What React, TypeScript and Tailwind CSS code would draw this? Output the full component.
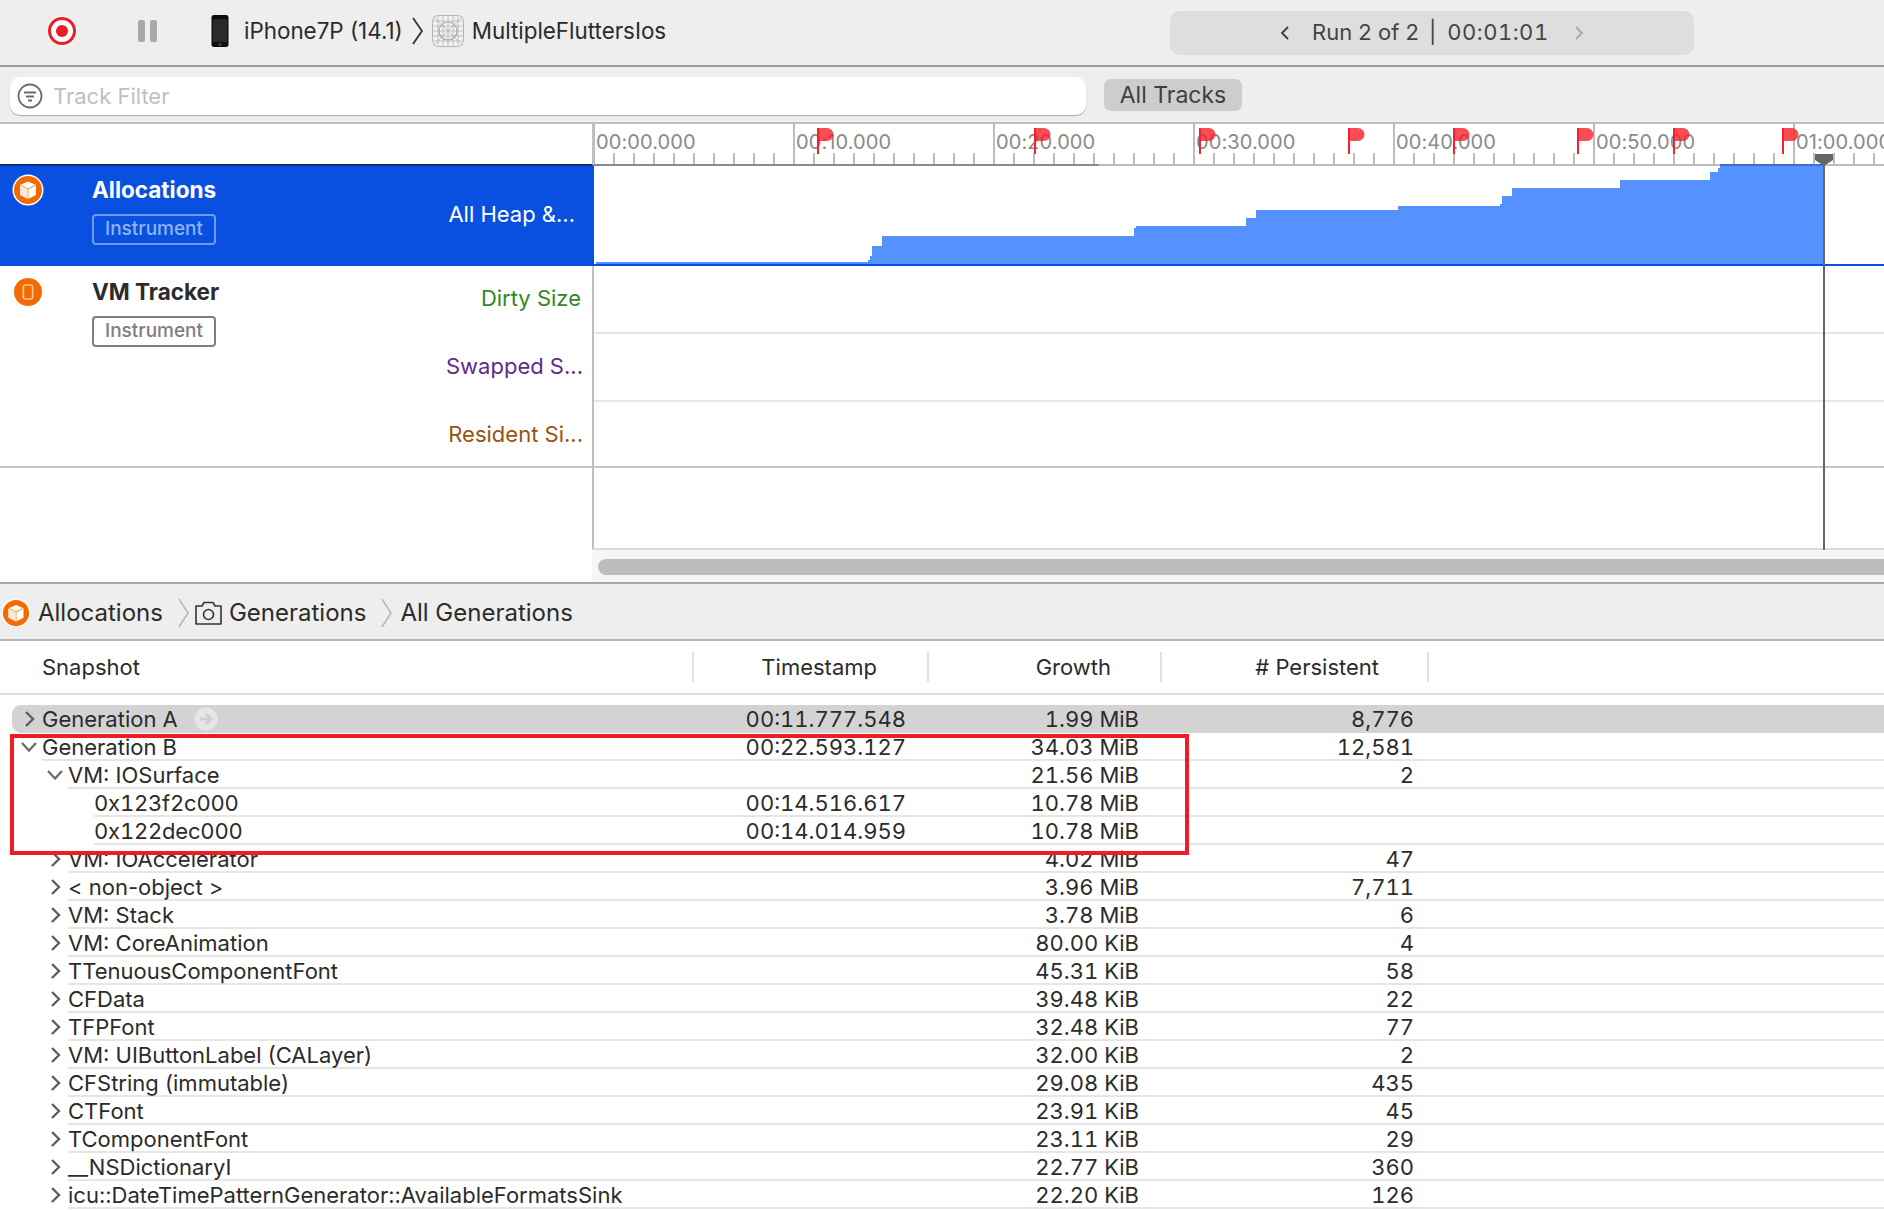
import React from "react";

const TICKS = Array.from({ length: 66 }, (_, i) => i * 20);
const LABELS = ["00:00.000", "00:10.000", "00:20.000", "00:30.000", "00:40.000", "00:50.000", "01:00.000"];
const FLAGS = [818, 1035, 1200, 1349, 1454, 1578, 1674, 1783];

const STEPS: [number, number][] = [
  [596, 262], [868, 260], [870, 256], [872, 246], [882, 236], [1134, 228], [1136, 226], [1246, 218],
  [1256, 210], [1398, 206], [1500, 204], [1502, 196], [1512, 188], [1620, 180], [1710, 172],
  [1718, 168], [1720, 166],
];

function chartPath() {
  const ox = 594;
  const oy = 166;
  let d = `M${STEPS[0][0] - ox} ${98}`;
  STEPS.forEach(([x, y], i) => {
    const next = STEPS[i + 1];
    d += ` L${x - ox} ${y - oy} L${(next ? next[0] : 1825) - ox} ${y - oy}`;
  });
  return `${d} L${1825 - ox} 98 Z`;
}

function Cube({ size }: { size: number }) {
  return (
    <svg width={size} height={size} viewBox="0 0 32 32" className="shrink-0">
      <circle cx="16" cy="16" r="15.5" fill="#ffffff" />
      <circle cx="16" cy="16" r="14" fill="#f26a00" />
      <path d="M16 7.5 L24 11 L24 21 L16 25 L8 21 L8 11 Z" fill="#ffffff" />
      <path d="M8 11 L16 15 L24 11 M16 15 L16 25" fill="none" stroke="#f0a060" strokeWidth="1.2" />
      <path d="M8 11.5 L15.5 15.3 L15.5 24.5 L8 20.7 Z" fill="#ffe8d4" />
    </svg>
  );
}

function Chip() {
  return (
    <svg width="28" height="28" viewBox="0 0 28 28" className="shrink-0">
      <circle cx="14" cy="14" r="14" fill="#f26a00" />
      <rect x="9.5" y="7" width="9" height="14" rx="1.5" fill="none" stroke="#ffc89a" strokeWidth="1.4" />
      <path d="M8 10 H9 M8 13 H9 M8 16 H9 M8 19 H9 M19 10 H20 M19 13 H20 M19 16 H20 M19 19 H20" stroke="#ffc89a" strokeWidth="1" />
    </svg>
  );
}

function Crumb() {
  return (
    <svg width="12" height="30" viewBox="0 0 12 30" className="shrink-0 block">
      <path d="M1 1 L10 15 L1 29" fill="none" stroke="#b8b8b8" strokeWidth="1.6" />
    </svg>
  );
}

function Chevron({ open }: { open: boolean }) {
  if (open) {
    return (
      <svg width="18" height="12" viewBox="0 0 18 12">
        <path d="M2 2 L9 9.5 L16 2" fill="none" stroke="#6e6e6e" strokeWidth="2.4" />
      </svg>
    );
  }
  return (
    <svg width="11" height="18" viewBox="0 0 11 18">
      <path d="M2 2 L9 9 L2 16" fill="none" stroke="#5f5f5f" strokeWidth="2.4" />
    </svg>
  );
}

type RowData = { name: string; level: 1 | 2 | 3; open?: boolean; leaf?: boolean; ts?: string; growth: string; count?: string };

const ROWS: RowData[] = [
  { name: "Generation B", level: 1, open: true, ts: "00:22.593.127", growth: "34.03 MiB", count: "12,581" },
  { name: "VM: IOSurface", level: 2, open: true, growth: "21.56 MiB", count: "2" },
  { name: "0x123f2c000", level: 3, leaf: true, ts: "00:14.516.617", growth: "10.78 MiB" },
  { name: "0x122dec000", level: 3, leaf: true, ts: "00:14.014.959", growth: "10.78 MiB" },
  { name: "VM: IOAccelerator", level: 2, growth: "4.02 MiB", count: "47" },
  { name: "< non-object >", level: 2, growth: "3.96 MiB", count: "7,711" },
  { name: "VM: Stack", level: 2, growth: "3.78 MiB", count: "6" },
  { name: "VM: CoreAnimation", level: 2, growth: "80.00 KiB", count: "4" },
  { name: "TTenuousComponentFont", level: 2, growth: "45.31 KiB", count: "58" },
  { name: "CFData", level: 2, growth: "39.48 KiB", count: "22" },
  { name: "TFPFont", level: 2, growth: "32.48 KiB", count: "77" },
  { name: "VM: UIButtonLabel (CALayer)", level: 2, growth: "32.00 KiB", count: "2" },
  { name: "CFString (immutable)", level: 2, growth: "29.08 KiB", count: "435" },
  { name: "CTFont", level: 2, growth: "23.91 KiB", count: "45" },
  { name: "TComponentFont", level: 2, growth: "23.11 KiB", count: "29" },
  { name: "__NSDictionaryI", level: 2, growth: "22.77 KiB", count: "360" },
  { name: "icu::DateTimePatternGenerator::AvailableFormatsSink", level: 2, growth: "22.20 KiB", count: "126" },
];

function Row({ r }: { r: RowData }) {
  const slot = r.level === 1 ? "w-[42px] pl-[20px]" : r.level === 2 ? "w-[68px] pl-[46px]" : "w-[94px]";
  const grid =
    r.level === 1
      ? "grid-cols-[650px_214px_233px_275px_1fr]"
      : r.level === 2
        ? "grid-cols-[624px_214px_233px_275px_1fr]"
        : "grid-cols-[598px_214px_233px_275px_1fr]";
  return (
    <div className="flex h-[28px]">
      <div className={`${slot} shrink-0 flex items-center ${r.open ? "" : "justify-end pr-[7px]"}`}>
        {!r.leaf && <Chevron open={!!r.open} />}
      </div>
      <div className={`flex-1 grid ${grid} items-center pt-[2px] border-b-2 border-[#e6e6e6] leading-[24px] whitespace-nowrap`}>
        <div className={r.leaf ? "tabular-nums tracking-[-0.2px]" : ""}>{r.name}</div>
        <div className="text-right tabular-nums">{r.ts}</div>
        <div className="text-right tabular-nums">{r.growth}</div>
        <div className="text-right tabular-nums">{r.count}</div>
        <div />
      </div>
    </div>
  );
}

export default function App() {
  return (
    <div className="relative w-[1884px] h-[1210px] overflow-hidden bg-white text-[#2b2b2b] text-[22px] [font-family:Inter,sans-serif]">
      {/* toolbar */}
      <div className="h-[67px] bg-[#eeeeee] border-b-2 border-[#9a9a9a] flex items-center pb-[4px] text-[22.4px]">
        <svg width="32" height="32" viewBox="0 0 32 32" className="ml-[46px] shrink-0">
          <circle cx="16" cy="16" r="15" fill="#ffffff" />
          <circle cx="16" cy="16" r="12.5" fill="none" stroke="#ee1c25" strokeWidth="3" />
          <circle cx="16" cy="16" r="6" fill="#ee1c25" />
        </svg>
        <div className="ml-[60px] flex gap-[5px] shrink-0">
          <div className="w-[7px] h-[22px] rounded-[2px] bg-[#a9a9a9]" />
          <div className="w-[7px] h-[22px] rounded-[2px] bg-[#a9a9a9]" />
        </div>
        <svg width="18" height="32" viewBox="0 0 18 32" className="ml-[54px] shrink-0">
          <rect x="0.5" y="0" width="17" height="32" rx="2.5" fill="#0e0e0e" />
          <rect x="2" y="4" width="14" height="23" fill="#2a2a2a" />
          <circle cx="9" cy="29.5" r="1.5" fill="#444" />
        </svg>
        <span className="ml-[15px] whitespace-nowrap">iPhone7P (14.1)</span>
        <svg width="12" height="28" viewBox="0 0 12 28" className="ml-[9px] shrink-0">
          <path d="M1 1 L10 14 L1 27" fill="none" stroke="#333" strokeWidth="1.8" />
        </svg>
        <svg width="32" height="32" viewBox="0 0 32 32" className="ml-[8px] shrink-0">
          <rect x="0.5" y="0.5" width="31" height="31" rx="6" fill="#f2f2f2" stroke="#b5b5b5" />
          <path d="M6 1V31M11 1V31M16 1V31M21 1V31M26 1V31M1 6H31M1 11H31M1 16H31M1 21H31M1 26H31M1 1L31 31M31 1L1 31" stroke="#b5b5b5" strokeWidth="0.8" fill="none" />
          <circle cx="16" cy="16" r="9" fill="none" stroke="#a8a8a8" strokeWidth="1.2" />
        </svg>
        <span className="ml-[8px] whitespace-nowrap">MultipleFluttersIos</span>
        <div className="ml-auto mr-[190px] mt-[4px] w-[524px] h-[44px] rounded-[10px] bg-[#dedede] flex items-center text-[#444] shrink-0 text-[22px]">
          <svg width="10" height="16" viewBox="0 0 10 16" className="ml-[110px] shrink-0">
            <path d="M8 2 L2 8 L8 14" fill="none" stroke="#3c3c3c" strokeWidth="1.8" />
          </svg>
          <span className="ml-[22px] whitespace-nowrap">Run 2 of 2</span>
          <span className="ml-[10px]">|</span>
          <span className="ml-[11px] whitespace-nowrap tabular-nums tracking-[0.5px]">00:01:01</span>
          <svg width="10" height="16" viewBox="0 0 10 16" className="ml-[25px] shrink-0">
            <path d="M2 2 L8 8 L2 14" fill="none" stroke="#a8a8a8" strokeWidth="1.8" />
          </svg>
        </div>
      </div>

      {/* filter bar */}
      <div className="h-[57px] bg-[#eeeeee] border-b-2 border-[#c0c0c0] flex items-center pt-[3px]">
        <div className="ml-[10px] w-[1076px] h-[38px] rounded-[10px] bg-white shadow-[0_1px_1px_rgba(0,0,0,0.3)] flex items-center">
          <svg width="26" height="26" viewBox="0 0 26 26" className="ml-[7px] shrink-0">
            <circle cx="13" cy="13" r="11.5" fill="none" stroke="#6a6a6a" strokeWidth="1.8" />
            <path d="M7 9.5H19M9 13.5H17M11 17.5H15" stroke="#6a6a6a" strokeWidth="1.8" />
          </svg>
          <span className="ml-[10px] text-[#c0c0c0]">Track Filter</span>
        </div>
        <div className="ml-[18px] -mt-[2px] w-[138px] h-[32px] rounded-[7px] bg-[#cdcdcd] text-[#3f3f3f] text-[23px] flex items-center justify-center whitespace-nowrap">
          All Tracks
        </div>
      </div>

      {/* timeline */}
      <div className="relative">
        <div className="grid grid-cols-[592px_1fr]">
          <div className="h-[40px]" />
          <div className="relative h-[40px] border-l-2 border-[#c0c0c0] flex overflow-hidden text-[20px] text-[#8a8a8a]">
            {LABELS.map((l) => (
              <div key={l} className="w-[200px] shrink-0 pl-[2px] leading-[36px] whitespace-nowrap tracking-[0.1px]">
                {l}
              </div>
            ))}
            <svg width="1290" height="40" viewBox="0 0 1290 40" className="absolute left-0 top-0">
              {TICKS.map((t) =>
                t % 200 === 0 ? (
                  <rect key={t} x={t - 1} y="0" width="2" height="40" fill="#bdbdbd" />
                ) : (
                  <rect key={t} x={t - 1} y="29" width="2" height="11" fill="#bdbdbd" />
                ),
              )}
              {FLAGS.map((f) => (
                <g key={f} fill="#f8212a" fillOpacity="0.8">
                  <rect x={f - 595} y="4" width="2" height="26" fillOpacity="1" />
                  <path d={`M${f - 593} 4 h8 a6.5 6.5 0 0 1 0 13 h-8 Z`} />
                </g>
              ))}
            </svg>
          </div>

          {/* Allocations */}
          <div className="h-[102px] bg-[#0950e0] border-t-2 border-[#0a2f85] text-white relative flex pl-[12px] pt-[8px]">
            <Cube size={32} />
            <div className="ml-[48px] mt-[1px] flex flex-col">
              <span className="font-bold leading-[30px] h-[30px] text-[22.5px]">Allocations</span>
              <span className="mt-[9px] w-[124px] h-[31px] rounded-[4px] border-2 border-[#6d9af0] text-[#8fb3f5] text-[19px] font-medium flex items-center justify-center">
                Instrument
              </span>
            </div>
            <span className="absolute right-[17px] top-[33px] leading-[30px] whitespace-nowrap">All Heap &amp;...</span>
          </div>
          <div className="relative h-[102px] border-l-[2px] border-[#0950e0] border-t-2 border-t-[#bdbdbd]">
            <div className="absolute left-0 -top-[2px] w-[505px] h-[2px] bg-[#8a8a8a]" />
            <div className="absolute left-[1126px] -top-[2px] w-[105px] h-[2px] bg-[#3a6fd0]" />
            <div className="absolute inset-x-0 bottom-0 h-[2px] bg-[#0950e0]" />
            <svg width="1290" height="98" viewBox="0 0 1290 98" className="absolute left-0 top-0">
              <path d={chartPath()} fill="#5591ff" />
            </svg>
          </div>

          {/* VM tracker */}
          <div className="relative h-[202px] border-b-2 border-[#c4c4c4] flex pl-[14px] pt-[12px]">
            <Chip />
            <div className="ml-[50px] -mt-[1px] flex flex-col">
              <span className="font-bold leading-[30px] h-[30px] text-[22.5px]">VM Tracker</span>
              <span className="mt-[9px] w-[124px] h-[31px] rounded-[4px] border-2 border-[#7e7e7e] text-[#7e7e7e] text-[19px] font-medium flex items-center justify-center">
                Instrument
              </span>
            </div>
            <div className="absolute right-[9px] top-0 flex flex-col items-end w-[140px] whitespace-nowrap">
              <span className="mt-[17px] mr-[2px] h-[30px] leading-[30px] text-[#2f8a25]">Dirty Size</span>
              <span className="mt-[38px] h-[30px] leading-[30px] text-[#5f2a8e]">Swapped S...</span>
              <span className="mt-[38px] h-[30px] leading-[30px] text-[#96540f]">Resident Si...</span>
            </div>
          </div>
          <div className="h-[202px] border-l-2 border-[#c0c0c0] border-b-2 border-b-[#c4c4c4] flex flex-col">
            <div className="h-[68px] border-b-2 border-[#e6e6e6]" />
            <div className="h-[68px] border-b-2 border-[#e6e6e6]" />
          </div>

          <div className="h-[82px]" />
          <div className="h-[82px] border-l-2 border-[#c0c0c0] border-b-2 border-b-[#dddddd]" />

          <div className="h-[32px]" />
          <div className="h-[32px] bg-[#f6f6f6] pl-[6px] pt-[9px]">
            <div className="h-[16px] rounded-l-full bg-[#bdbdbd]" />
          </div>
        </div>
        {/* playhead */}
        <div className="absolute left-[1823px] top-[30px] w-[2px] h-[396px] bg-[#666666]" />
        <svg width="18" height="12" viewBox="0 0 18 12" className="absolute left-[1815px] top-[30px]">
          <path d="M0 0 H18 V6 L9 12 L0 6 Z" fill="#666666" />
        </svg>
      </div>

      {/* breadcrumb */}
      <div className="h-[59px] bg-[#eeeeee] border-y-2 border-t-[#a8a8a8] border-b-[#b5b5b5] flex items-center pl-[1px] pt-[2px] text-[24px]">
        <Cube size={30} />
        <span className="ml-[7px]">Allocations</span>
        <span className="ml-[15px]"><Crumb /></span>
        <svg width="27" height="24" viewBox="0 0 27 24" className="ml-[5px] shrink-0">
          <path d="M1 5 H7 L9 1.5 H18 L20 5 H26 V23 H1 Z" fill="none" stroke="#333" strokeWidth="1.6" strokeLinejoin="round" />
          <circle cx="13.5" cy="13.5" r="5" fill="none" stroke="#333" strokeWidth="1.6" />
        </svg>
        <span className="ml-[7px]">Generations</span>
        <span className="ml-[15px]"><Crumb /></span>
        <span className="ml-[7px]">All Generations</span>
      </div>

      {/* table header */}
      <div className="h-[54px] border-b-2 border-[#dddddd] grid grid-cols-[692px_235px_233px_269px] items-center">
        <div className="pl-[42px]">Snapshot</div>
        <div className="h-[30px] border-l-2 border-[#e0e0e0] flex items-center justify-end pr-[50px]">Timestamp</div>
        <div className="h-[30px] border-l-2 border-[#e0e0e0] flex items-center justify-end pr-[49px]">Growth</div>
        <div className="h-[30px] border-x-2 border-[#e0e0e0] flex items-center justify-end pr-[48px]"># Persistent</div>
      </div>

      {/* rows */}
      <div className="pt-[10px]">
        <div className="ml-[12px] h-[28px] leading-[24px] rounded-l-[9px] bg-[#d3d3d3] grid grid-cols-[680px_214px_233px_275px_1fr] items-center whitespace-nowrap">
          <div className="flex items-center pl-[12px]">
            <Chevron open={false} />
            <span className="ml-[7px]">Generation A</span>
            <svg width="24" height="24" viewBox="0 0 24 24" className="ml-[16px] shrink-0">
              <circle cx="12" cy="12" r="11.5" fill="#e6e6e6" />
              <path d="M6 12 H16 M12 7 L17 12 L12 17" fill="none" stroke="#cfcfcf" strokeWidth="3" />
            </svg>
          </div>
          <div className="text-right tabular-nums">00:11.777.548</div>
          <div className="text-right tabular-nums">1.99 MiB</div>
          <div className="text-right tabular-nums">8,776</div>
          <div />
        </div>
        {ROWS.map((r) => (
          <Row key={r.name} r={r} />
        ))}
      </div>

      {/* annotation */}
      <div className="absolute left-[10px] top-[734px] w-[1179px] h-[121px] border-4 border-[#ee1c25]" />
    </div>
  );
}
